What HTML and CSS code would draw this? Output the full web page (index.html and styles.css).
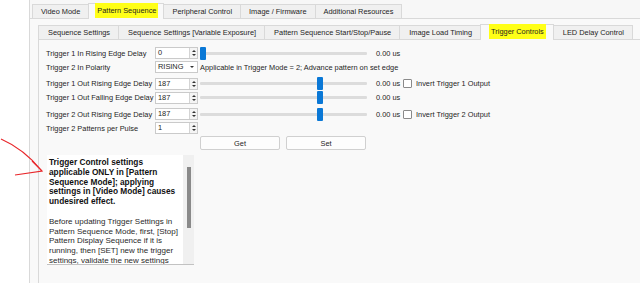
FILE: index.html
```html
<!DOCTYPE html>
<html lang="en">

<head>
    <meta charset="UTF-8">
    <title>Trigger Controls</title>
    <link rel="stylesheet" href="styles.css">
</head>

<body>
    <div class="window">
        <div class="tabs">
            <div class="tab">Video Mode</div>
            <div class="tab active"><span class="marker">Pattern Sequence</span></div>
            <div class="tab">Peripheral Control</div>
            <div class="tab">Image / Firmware</div>
            <div class="tab">Additional Resources</div>
        </div>
        <div class="panel">
            <div class="tabs sub">
                <div class="tab">Sequence Settings</div>
                <div class="tab">Sequence Settings [Variable Exposure]</div>
                <div class="tab">Pattern Sequence Start/Stop/Pause</div>
                <div class="tab">Image Load Timing</div>
                <div class="tab active"><span class="marker">Trigger Controls</span></div>
                <div class="tab">LED Delay Control</div>
            </div>
            <div class="subpanel">
                <div class="row">
                    <span class="label">Trigger 1 In Rising Edge Delay</span>
                    <span class="spin"><span class="num">0</span><span class="btns"><i class="up"></i><i class="down"></i></span></span>
                    <span class="slider"><span class="handle" style="left: 0px"></span></span>
                    <span class="value">0.00 us</span>
                </div>
                <div class="row">
                    <span class="label">Trigger 2 In Polarity</span>
                    <span class="combo">RISING<i class="caret"></i></span>
                    <span class="note">Applicable in Trigger Mode = 2; Advance pattern on set edge</span>
                </div>
                <div class="row group">
                    <span class="label">Trigger 1 Out Rising Edge Delay</span>
                    <span class="spin"><span class="num">187</span><span class="btns"><i class="up"></i><i class="down"></i></span></span>
                    <span class="slider"><span class="handle" style="left: 117px"></span></span>
                    <span class="value">0.00 us</span>
                    <span class="check"></span>
                    <span class="check-label">Invert Trigger 1 Output</span>
                </div>
                <div class="row">
                    <span class="label">Trigger 1 Out Falling Edge Delay</span>
                    <span class="spin"><span class="num">187</span><span class="btns"><i class="up"></i><i class="down"></i></span></span>
                    <span class="slider"><span class="handle" style="left: 117px"></span></span>
                    <span class="value">0.00 us</span>
                </div>
                <div class="row group">
                    <span class="label">Trigger 2 Out Rising Edge Delay</span>
                    <span class="spin"><span class="num">187</span><span class="btns"><i class="up"></i><i class="down"></i></span></span>
                    <span class="slider"><span class="handle" style="left: 117px"></span></span>
                    <span class="value">0.00 us</span>
                    <span class="check"></span>
                    <span class="check-label">Invert Trigger 2 Output</span>
                </div>
                <div class="row">
                    <span class="label">Trigger 2 Patterns per Pulse</span>
                    <span class="spin"><span class="num">1</span><span class="btns"><i class="up"></i><i class="down"></i></span></span>
                </div>
                <div class="buttons">
                    <button>Get</button>
                    <button>Set</button>
                </div>
                <div class="info">
                    <div class="info-text">
                        <p class="warn">Trigger Control settings applicable ONLY in [Pattern Sequence Mode]; applying settings in [Video Mode] causes undesired effect.</p>
                        <p>Before updating Trigger Settings in Pattern Sequence Mode, first, [Stop] Pattern Display Sequence if it is running, then [SET] new the trigger settings, validate the new settings</p>
                    </div>
                    <div class="scrollbar"><div class="thumb"></div></div>
                </div>
            </div>
        </div>
    </div>
    <svg class="arrow" width="50" height="50" viewBox="0 130 50 50">
        <path d="M1 139 Q24 149 42 171" fill="none" stroke="#e8262a" stroke-width="1.1"/>
        <path d="M32 161 L42 171 L15 175" fill="none" stroke="#e8262a" stroke-width="1.1"/>
    </svg>
</body>

</html>
```

FILE: styles.css
```css
body {
    margin: 0;
    background: #ffffff;
    font-family: 'Liberation Sans', Arial, sans-serif;
    font-size: 7.4px;
    color: #1e1e1e;
    height: 283px;
    overflow: hidden;
    position: relative;
}

.window {
    margin-left: 29px;
    width: 611px;
    height: 283px;
    border-left: 1px solid #d9d9d9;
    background: #f7f7f7;
    overflow: hidden;
}

.tabs {
    display: flex;
    align-items: flex-end;
    height: 18px;
    padding-left: 2px;
}

.tab {
    height: 13px;
    line-height: 13px;
    padding: 0 8px;
    background: #f0f0f0;
    border: 1px solid #d9d9d9;
    border-bottom: none;
    margin-right: -1px;
    white-space: nowrap;
}

.tab.active {
    height: 15px;
    line-height: 14px;
    background: #f9f9f9;
    position: relative;
    margin-bottom: -1px;
    padding: 0 5px 0 6px;
    z-index: 1;
}

.marker {
    background: #ffff17;
    padding: 3px 2px;
}

.panel {
    border-top: 1px solid #d9d9d9;
    background: #f9f9f9;
    height: 264px;
    padding-left: 8px;
}

.tabs.sub {
    height: 20px;
    padding-left: 0;
}

.tabs.sub .tab {
    padding: 0 8px 0 9px;
}

.tabs.sub .tab.active {
    padding: 0 7px 0 8px;
}

.subpanel {
    border-top: 1px solid #d9d9d9;
    border-left: 1px solid #d9d9d9;
    background: #f9f9f9;
    height: 250px;
    padding: 6px 0 0 7px;
}

.row {
    display: flex;
    align-items: center;
    height: 14px;
    white-space: nowrap;
}

.row.group {
    margin-top: 2.5px;
}

.label {
    width: 109px;
}

.spin {
    display: flex;
    width: 41px;
    height: 10px;
    border: 1px solid #cacaca;
    background: #ffffff;
}

.num {
    flex: 1;
    line-height: 10px;
    padding-left: 2px;
}

.btns {
    width: 7px;
    border-left: 1px solid #d4d4d4;
    background: #f4f4f4;
    display: flex;
    flex-direction: column;
    align-items: center;
    justify-content: space-evenly;
}

.up,
.down {
    width: 0;
    height: 0;
    border-left: 2px solid transparent;
    border-right: 2px solid transparent;
}

.up {
    border-bottom: 2px solid #333333;
}

.down {
    border-top: 2px solid #333333;
}

.slider {
    position: relative;
    width: 167px;
    height: 3px;
    margin-left: 2px;
    background: #dcdcdc;
    border-radius: 1px;
}

.handle {
    position: absolute;
    top: -5px;
    width: 6px;
    height: 13px;
    background: #0a78d6;
    border-radius: 1px;
}

.value {
    margin-left: 9px;
    width: 27px;
}

.check {
    width: 7px;
    height: 7px;
    border: 1px solid #8a8a8a;
    border-radius: 1px;
    background: #ffffff;
}

.check-label {
    margin-left: 4px;
}

.combo {
    position: relative;
    width: 39px;
    height: 10px;
    line-height: 10px;
    padding-left: 2px;
    border: 1px solid #cacaca;
    background: #ffffff;
}

.caret {
    position: absolute;
    right: 3px;
    top: 4px;
    border-left: 2px solid transparent;
    border-right: 2px solid transparent;
    border-top: 2px solid #333333;
}

.note {
    margin-left: 2px;
}

.buttons {
    display: flex;
    gap: 6px;
    margin: 1px 0 0 154px;
}

.buttons button {
    width: 80px;
    height: 14px;
    padding: 0;
    font-family: 'Liberation Sans', Arial, sans-serif;
    font-size: 7.4px;
    color: #1e1e1e;
    background: #fdfdfd;
    border: 1px solid #d0d0d0;
    border-radius: 2px;
}

.info {
    display: flex;
    width: 147px;
    height: 109px;
    margin: 5px 0 0 1px;
    background: #ffffff;
    border-bottom: 1px solid #c2c2c2;
    overflow: hidden;
}

.info-text {
    flex: 1;
    padding: 3px 0 0 2px;
    font-size: 8px;
    line-height: 9.8px;
    color: #2a2a2a;
}

.info-text p {
    margin: 0 0 9.8px 0;
}

.warn {
    font-weight: bold;
    font-size: 8.3px;
    color: #111111;
}

.scrollbar {
    width: 11px;
    background: #f0f0f0;
    display: flex;
    justify-content: center;
}

.thumb {
    width: 4px;
    height: 61px;
    margin-top: 12px;
    background: #8a8a8a;
}

.arrow {
    position: absolute;
    left: 0;
    top: 130px;
}
```
